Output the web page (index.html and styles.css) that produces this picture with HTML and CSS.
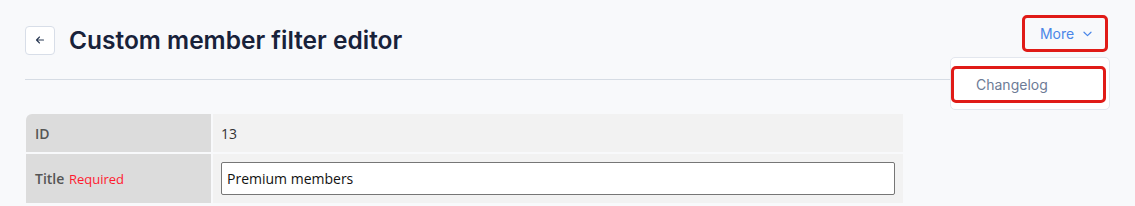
FILE: index.html
```html
<!DOCTYPE html>
<html lang="en">
  <head>
    <meta charset="UTF-8" />
    <meta name="viewport" content="width=device-width, initial-scale=1.0" />
    <title>Custom member filter editor</title>
    <link rel="stylesheet" href="styles.css">
  </head>
  <body>
    <div class="page">
      <div class="header">
        <div class="header-left">
          <button class="back-button" aria-label="Back">
            <svg width="10" height="10" viewBox="0 0 10 10">
              <path d="M8.5 5H1.5M4.5 2L1.5 5L4.5 8" fill="none" stroke="#2b3a55" stroke-width="1.1" stroke-linecap="round" stroke-linejoin="round" />
            </svg>
          </button>
          <h1 class="page-title">Custom member filter editor</h1>
        </div>
        <div class="more-menu">
          <button class="more-button">
            More
            <svg width="9" height="6" viewBox="0 0 9 6">
              <path d="M1 1.2L4.5 4.6L8 1.2" fill="none" stroke="#4a86e8" stroke-width="1.2" stroke-linecap="round" stroke-linejoin="round" />
            </svg>
          </button>
          <div class="dropdown">
            <a class="dropdown-item" href="#">Changelog</a>
          </div>
        </div>
      </div>

      <table class="form-table">
        <tr class="row-id">
          <th>ID</th>
          <td>13</td>
        </tr>
        <tr class="row-title">
          <th>Title <span class="required">Required</span></th>
          <td><input type="text" value="Premium members" /></td>
        </tr>
      </table>
    </div>
  </body>
</html>
```

FILE: styles.css
```css
body {
  margin: 0;
  background-color: #f8f9fb;
  font-family: "Open Sans", Arial, sans-serif;
}

.page {
  padding: 15px 25px 0 25px;
}

.header {
  display: flex;
  justify-content: space-between;
  align-items: flex-start;
  border-bottom: 1px solid #d6dce4;
  height: 64px;
}

.header-left {
  display: flex;
  align-items: center;
  gap: 14px;
  margin-top: 10px;
}

.back-button {
  width: 30px;
  height: 29px;
  padding: 0;
  background-color: #fff;
  border: 1px solid #d8dee8;
  border-radius: 4px;
  display: flex;
  align-items: center;
  justify-content: center;
}

.page-title {
  margin: 0;
  font-family: Inter, sans-serif;
  font-size: 24.5px;
  font-weight: 600;
  color: #18223a;
}

.more-menu {
  position: relative;
  width: 160px;
  display: flex;
  justify-content: flex-end;
}

.more-button {
  width: 86px;
  height: 37px;
  margin-right: 2px;
  border: 3px solid #e01b17;
  border-radius: 5px;
  background: transparent;
  color: #4a86e8;
  font-family: Inter, sans-serif;
  font-size: 14px;
  display: flex;
  align-items: center;
  justify-content: center;
  gap: 9px;
  padding: 0 0 0 2px;
}

.dropdown {
  position: absolute;
  top: 42px;
  left: 0;
  width: 158px;
  height: 51px;
  background-color: #fff;
  border: 1px solid #e3e7ee;
  border-radius: 5px;
}

.dropdown-item {
  display: block;
  box-sizing: border-box;
  margin: 8px 3px 0 0;
  height: 37px;
  padding: 7px 0 0 22px;
  border: 3px solid #e01b17;
  border-radius: 5px;
  color: #6d7b96;
  font-family: Inter, sans-serif;
  font-size: 14px;
  text-decoration: none;
}

.form-table {
  margin-top: 32px;
  margin-left: 1px;
  width: 877px;
  border-collapse: separate;
  border-spacing: 0 2px;
  font-size: 14px;
}

.form-table th {
  width: 167px;
  text-align: left;
  font-weight: 600;
  color: #555;
  background-color: #dcdcdc;
  padding: 0 9px;
  border-right: 2px solid #f8f9fb;
}

.form-table td {
  background-color: #f2f2f2;
  color: #333;
  padding: 0 8px;
}

.row-id th,
.row-id td {
  height: 38px;
}

.row-id th {
  border-top-left-radius: 6px;
}

.row-title th,
.row-title td {
  height: 49px;
}

.required {
  color: #ff1a2e;
  font-size: 13px;
  font-weight: 500;
  margin-left: 1px;
}

.form-table input {
  width: 100%;
  box-sizing: border-box;
  height: 33px;
  border: 1px solid #767676;
  border-radius: 2px;
  padding: 0 5px;
  font-family: "Open Sans", Arial, sans-serif;
  font-size: 14px;
  color: #111;
  background-color: #fff;
}
```
